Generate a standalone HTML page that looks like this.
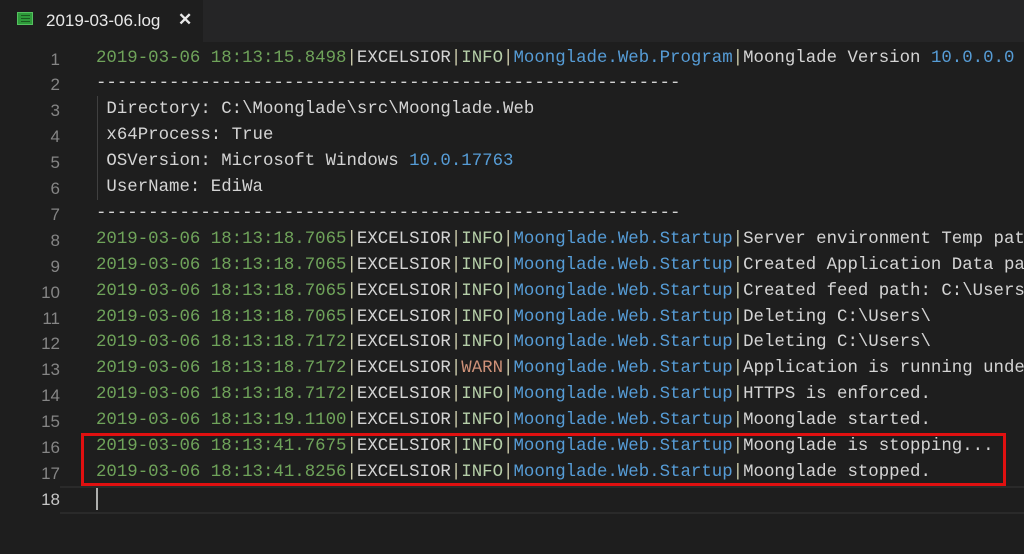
<!DOCTYPE html>
<html><head><meta charset="utf-8"><style>
body{margin:0;width:1024px;height:554px;background:#1e1e1e;overflow:hidden;position:relative;font-family:"Liberation Mono",monospace}
.bar{position:absolute;left:0;top:0;width:1024px;height:42px;background:#252526}
.tab{position:absolute;left:0;top:0;width:203px;height:42px;background:#1e1e1e;font-family:"Liberation Sans",sans-serif;color:#e8e8e8;font-size:17px}
.tab .ic{position:absolute;left:17px;top:12px;width:16px;height:13px;background:#2e9b3a;border:1px solid #55c060;box-sizing:border-box}
.tab .ic:before{content:"";position:absolute;left:3px;right:2px;top:2px;height:1px;background:#1a5a20;box-shadow:0 3px #1a5a20,0 6px #1a5a20}
.tab .t{position:absolute;left:46px;top:11px}
.tab .x{position:absolute;left:178px;top:10px;font-size:17px;font-weight:bold}
.ln{position:absolute;left:0;width:60px;text-align:right;color:#858585;font-size:17px;font-family:"Liberation Sans",sans-serif}
.code{position:absolute;left:96px;white-space:pre;font-size:17.4px;color:#d4d4d4}
.g{color:#6fa35a}.b{color:#569cd6}.p{color:#c8c8a8}.i{color:#b5cea8}.w{color:#ce9178}.n{color:#569cd6}
</style></head><body>
<div class="bar"></div>
<div class="tab"><div class="ic"></div><span class="t">2019-03-06.log</span><span class="x">✕</span></div>
<div style="position:absolute;left:60px;top:486px;width:964px;height:24px;border-top:2px solid #2a2a2a;border-bottom:2px solid #2a2a2a"></div>
<div style="position:absolute;left:96px;top:488px;width:2px;height:22px;background:#aeafad"></div>
<div style="position:absolute;left:97px;top:96px;width:1px;height:104px;background:#404040"></div>
<div id="c"></div>
<div style="position:absolute;left:81px;top:433px;width:925px;height:53px;border:3px solid #e01010;box-sizing:border-box"></div>
<script>
const L=[
'<span class="g">2019-03-06 18:13:15.8498</span><span class="p">|</span>EXCELSIOR<span class="p">|</span><span class="i">INFO</span><span class="p">|</span><span class="b">Moonglade.Web.Program</span><span class="p">|</span>Moonglade Version <span class="n">10.0.0.0</span>',
'-'.repeat(56),
' Directory: C:\\Moonglade\\src\\Moonglade.Web',
' x64Process: True',
' OSVersion: Microsoft Windows <span class="n">10.0.17763</span>',
' UserName: EdiWa',
'-'.repeat(56)];
const S=[['18.7065','INFO','Server environment Temp path'],['18.7065','INFO','Created Application Data path'],['18.7065','INFO','Created feed path: C:\\Users\\'],['18.7065','INFO','Deleting C:\\Users\\'],['18.7172','INFO','Deleting C:\\Users\\'],['18.7172','WARN','Application is running under'],['18.7172','INFO','HTTPS is enforced.'],['19.1100','INFO','Moonglade started.'],['41.7675','INFO','Moonglade is stopping...'],['41.8256','INFO','Moonglade stopped.']];
S.forEach(s=>L.push('<span class="g">2019-03-06 18:13:'+s[0]+'</span><span class="p">|</span>EXCELSIOR<span class="p">|</span><span class="'+(s[1]=='WARN'?'w':'i')+'">'+s[1]+'</span><span class="p">|</span><span class="b">Moonglade.Web.Startup</span><span class="p">|</span>'+s[2]));
L.push('');
let h='';
L.forEach((l,k)=>{const y=48.5+k*25.9;h+='<div class="ln" style="top:'+(y+1)+'px;'+(k==17?'color:#c6c6c6':'')+'">'+(k+1)+'</div><div class="code" style="top:'+y+'px">'+l+'</div>';});
document.getElementById('c').innerHTML=h;
</script>
</body></html>
